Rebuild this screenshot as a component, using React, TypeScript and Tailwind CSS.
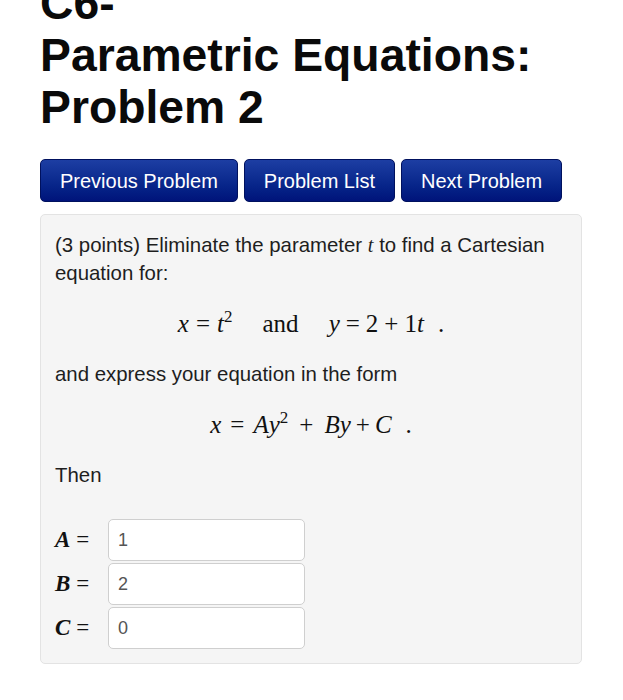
import React from 'react';

const sans = { fontFamily: '"Liberation Sans", Arial, sans-serif' };
const serif = { fontFamily: '"Liberation Serif", "Times New Roman", serif' };

function NavButton({ label }: { label: string }) {
  return (
    <button className="h-[43px] px-[19px] rounded-[5px] border border-[#00115e] bg-gradient-to-b from-[#1d3ea3] to-[#00137a] text-white text-[20px] leading-none">
      {label}
    </button>
  );
}

function AnswerRow({ name, value }: { name: string; value: string }) {
  return (
    <div className="flex items-center">
      <div className="w-[53px] text-[23px] text-[#111] font-bold" style={serif}>
        <i>{name}</i>
        <span className="ml-[6px] font-normal">=</span>
      </div>
      <input
        readOnly
        value={value}
        className="w-[197px] h-[42px] rounded-[5px] border border-[#cfcfcf] bg-white pl-[9px] text-[18px] text-[#555] outline-none"
        style={sans}
      />
    </div>
  );
}

function Sq() {
  return <span className="relative top-[-10px] text-[17px] leading-none">2</span>;
}

export default function App() {
  return (
    <div className="min-h-screen bg-white px-[40px] pb-10" style={sans}>
      <h1 className="mt-[-23px] text-[46.3px] leading-[52px] font-bold text-[#0a0a0a]">
        <span className="block">C6-</span>
        <span className="block">Parametric Equations:</span>
        <span className="block">Problem 2</span>
      </h1>

      <div className="mt-[26px] flex gap-[6px]">
        <NavButton label="Previous Problem" />
        <NavButton label="Problem List" />
        <NavButton label="Next Problem" />
      </div>

      <div className="mt-[12px] w-[542px] rounded-[5px] border border-[#e3e3e3] bg-[#f5f5f5] px-[14px] pt-[16px] pb-[14px] text-[20.4px] leading-[28px] text-[#1e1e1e]">
        <p>
          (3 points) Eliminate the parameter <i style={serif}>t</i> to find a Cartesian equation for:
        </p>

        <div className="mt-[22px] flex items-baseline justify-center text-[25px] leading-[30px] text-[#111]" style={serif}>
          <i>x</i>
          <span className="mx-[7px]">=</span>
          <i>t</i>
          <Sq />
          <span className="ml-[30px] mr-[30px]">and</span>
          <i>y</i>
          <span className="mx-[6px]">=</span>
          <span>2</span>
          <span className="mx-[6px]">+</span>
          <span>1</span>
          <i>t</i>
          <span className="ml-[14px]">.</span>
        </div>

        <p className="mt-[21px]">and express your equation in the form</p>

        <div className="mt-[22px] flex items-baseline justify-center text-[25px] leading-[30px] text-[#111]" style={serif}>
          <i>x</i>
          <span className="mx-[9px]">=</span>
          <i>A</i>
          <i>y</i>
          <Sq />
          <span className="mx-[11px]">+</span>
          <i>B</i>
          <i>y</i>
          <span className="mx-[5px]">+</span>
          <i>C</i>
          <span className="ml-[14px]">.</span>
        </div>

        <p className="mt-[21px]">Then</p>

        <div className="mt-[30px] flex flex-col gap-[2px]">
          <AnswerRow name="A" value="1" />
          <AnswerRow name="B" value="2" />
          <AnswerRow name="C" value="0" />
        </div>
      </div>
    </div>
  );
}
